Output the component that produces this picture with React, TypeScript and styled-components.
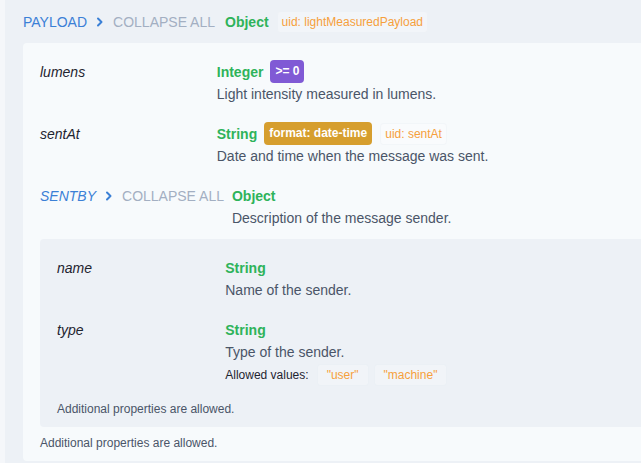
import React from 'react'
import styled, { createGlobalStyle } from 'styled-components'

const GlobalStyle = createGlobalStyle`
  html, body {
    margin: 0;
    padding: 0;
    background: #f5f7fa;
    overflow: hidden;
    font-family: "Liberation Sans", Arial, Helvetica, sans-serif;
  }
`

const Page = styled.div`
  padding-left: 5px;
  width: 760px;
`

const Container = styled.div`
  width: 745px;
  box-sizing: border-box;
  background: #edf1f6;
  padding: 0 18px 3px;
`

const HeaderRow = styled.div`
  display: flex;
  align-items: center;
  height: 43px;
`

const Title = styled.span<{ $italic?: boolean }>`
  font-size: 14px;
  color: #3b80d6;
  text-transform: uppercase;
  font-style: ${p => (p.$italic ? 'italic' : 'normal')};
  white-space: nowrap;
`

const Chevron = styled.svg`
  width: 8px;
  height: 10px;
  margin-left: 9px;
  flex-shrink: 0;
`

const Collapse = styled.span`
  font-size: 14px;
  color: #a3afc2;
  text-transform: uppercase;
  margin-left: 9px;
  white-space: nowrap;
`

const TypeName = styled.span<{ $gap?: number }>`
  font-size: 14px;
  font-weight: bold;
  color: #2eb35a;
  margin-left: ${p => p.$gap ?? 0}px;
`

const Uid = styled.span`
  font-size: 12px;
  color: #f6a03c;
  background: rgba(255, 255, 255, 0.3);
  border: 1px solid rgba(226, 232, 240, 0.3);
  border-radius: 4px;
  padding: 3px 4px;
  margin-left: 8px;
  white-space: nowrap;
`

const Badge = styled.span<{ $tone: 'purple' | 'gold' }>`
  font-size: 12px;
  font-weight: bold;
  color: #fff;
  background: ${p => (p.$tone === 'purple' ? '#805ad5' : '#d69e2e')};
  border-radius: 4px;
  padding: 4px 5px;
  line-height: 15px;
  margin-left: 7px;
  white-space: nowrap;
`

const Panel = styled.div<{ $nested?: boolean }>`
  background: ${p => (p.$nested ? '#edf1f6' : '#f7fafc')};
  border-radius: 4px;
  padding: ${p => (p.$nested ? '8px 17px 10px' : '8px 17px 10px')};
  margin-top: ${p => (p.$nested ? '2px' : '0')};
`

const Row = styled.div`
  display: flex;
  padding: 9px 0;
`

const NameCol = styled.div`
  min-width: 25%;
  margin-right: 8px;
  flex-shrink: 0;
`

const NameLine = styled.div`
  display: flex;
  align-items: center;
  height: 23px;
`

const PropName = styled.span`
  font-size: 14px;
  font-style: italic;
  color: #1f2430;
`

const TypeCol = styled.div`
  display: flex;
  flex-direction: column;
`

const TypeLine = styled.div`
  display: flex;
  align-items: center;
  height: 23px;
`

const Description = styled.div`
  font-size: 14px;
  line-height: 20px;
  color: #4a5568;
  margin-top: 1px;
  white-space: nowrap;
`

const Allowed = styled.div`
  display: flex;
  align-items: center;
  gap: 5px;
  margin-top: 1px;
  height: 23px;
  font-size: 12px;
  color: #1f2430;
`

const AllowedLabel = styled.span`
  margin-right: 3px;
`

const Value = styled.span`
  color: #f6a03c;
  background: rgba(255, 255, 255, 0.25);
  border: 1px solid rgba(226, 232, 240, 0.4);
  border-radius: 4px;
  padding: 3px 9px;
`

const Note = styled.div<{ $top: number }>`
  font-size: 12px;
  line-height: 16px;
  color: #4a5568;
  margin-top: ${p => p.$top}px;
`

const ChevronIcon = () => (
  <Chevron viewBox="0 0 8 10">
    <path d="M2 1.5 L5.5 5 L2 8.5" fill="none" stroke="#3b80d6" strokeWidth="2" strokeLinecap="round" strokeLinejoin="round" />
  </Chevron>
)

type PropProps = {
  name: string
  type: string
  desc: string
  badges?: React.ReactNode
  children?: React.ReactNode
}

const Property = ({ name, type, desc, badges, children }: PropProps) => (
  <Row>
    <NameCol>
      <NameLine>
        <PropName>{name}</PropName>
      </NameLine>
    </NameCol>
    <TypeCol>
      <TypeLine>
        <TypeName>{type}</TypeName>
        {badges}
      </TypeLine>
      <Description>{desc}</Description>
      {children}
    </TypeCol>
  </Row>
)

const App = () => {
  return (
    <Page>
      <GlobalStyle />
      <Container>
        <HeaderRow>
          <Title>Payload</Title>
          <ChevronIcon />
          <Collapse>Collapse all</Collapse>
          <TypeName $gap={10}>Object</TypeName>
          <Uid>uid: lightMeasuredPayload</Uid>
        </HeaderRow>
        <Panel>
          <Property
            name="lumens"
            type="Integer"
            desc="Light intensity measured in lumens."
            badges={<Badge $tone="purple">&gt;= 0</Badge>}
          />
          <Property
            name="sentAt"
            type="String"
            desc="Date and time when the message was sent."
            badges={
              <>
                <Badge $tone="gold">format: date-time</Badge>
                <Uid>uid: sentAt</Uid>
              </>
            }
          />
          <Row>
            <NameCol>
              <NameLine>
                <Title $italic>sentBy</Title>
                <ChevronIcon />
                <Collapse>Collapse all</Collapse>
              </NameLine>
            </NameCol>
            <TypeCol>
              <TypeLine>
                <TypeName>Object</TypeName>
              </TypeLine>
              <Description>Description of the message sender.</Description>
            </TypeCol>
          </Row>
          <Panel $nested>
            <Property name="name" type="String" desc="Name of the sender." />
            <Property name="type" type="String" desc="Type of the sender.">
              <Allowed>
                <AllowedLabel>Allowed values:</AllowedLabel>
                <Value>"user"</Value>
                <Value>"machine"</Value>
              </Allowed>
            </Property>
            <Note $top={6}>Additional properties are allowed.</Note>
          </Panel>
          <Note $top={8}>Additional properties are allowed.</Note>
        </Panel>
      </Container>
    </Page>
  )
}

export default App
